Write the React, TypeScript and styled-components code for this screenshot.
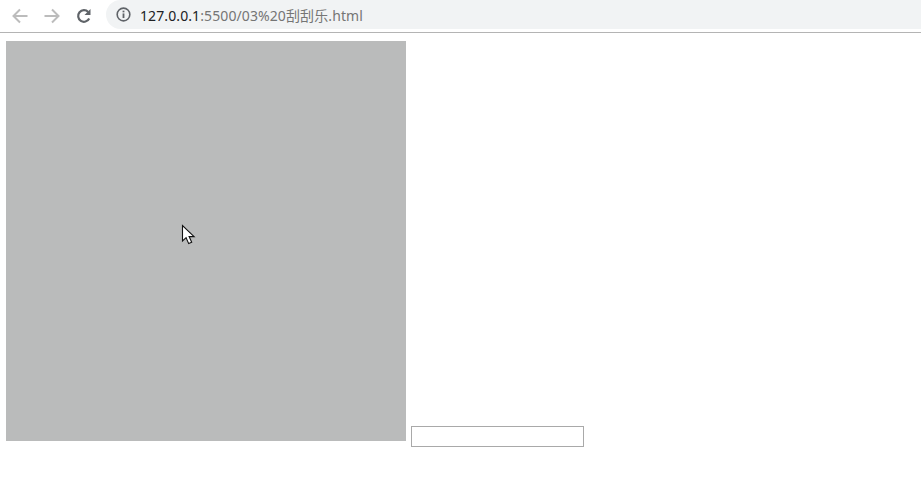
import styled, { createGlobalStyle } from "styled-components";

const GlobalStyle = createGlobalStyle`
  html, body {
    margin: 0;
    padding: 0;
    background: #fff;
  }
`;

const Page = styled.div`
  position: relative;
  width: 921px;
  height: 485px;
  overflow: hidden;
  background: #fff;
`;

const Toolbar = styled.div`
  display: flex;
  align-items: center;
  height: 32px;
  padding-left: 9px;
  border-bottom: 1px solid #b4b4b4;
  font-family: "Noto Sans", "Noto Sans CJK SC", sans-serif;
`;

const NavButton = styled.div<{ $gap?: number }>`
  display: flex;
  width: 22px;
  height: 22px;
  margin-right: ${(p) => p.$gap ?? 10}px;
  align-items: center;
  justify-content: center;
`;

const AddressBar = styled.div`
  display: flex;
  flex: 1;
  align-items: center;
  height: 29px;
  margin-top: -3px;
  margin-left: 2px;
  padding-left: 10px;
  border-radius: 15px 0 0 15px;
  background: #f1f3f4;
`;

const InfoIcon = styled.svg`
  flex: none;
  width: 15px;
  height: 15px;
  margin-right: 9px;
`;

const Url = styled.div`
  color: #757575;
  font-size: 14px;
  letter-spacing: 0.1px;
  white-space: nowrap;
`;

const Host = styled.span`
  color: #202124;
`;

const Main = styled.div`
  display: flex;
  align-items: baseline;
  gap: 5px;
  padding: 8px 6px 0;
`;

const Scratch = styled.canvas`
  display: block;
  width: 400px;
  height: 400px;
  background: #babbbb;
`;

const CodeInput = styled.input`
  box-sizing: border-box;
  width: 173px;
  height: 21px;
  padding: 1px 2px;
  border: 1px solid #a9a9a9;
  border-radius: 0;
  outline: none;
  background: #fff;
  font-size: 13px;
`;

const Cursor = styled.svg`
  position: absolute;
  left: 181px;
  top: 224px;
  width: 15px;
  height: 22px;
`;

export default function App() {
  return (
    <Page>
      <GlobalStyle />
      <Toolbar>
        <NavButton>
          <svg width="18" height="18" viewBox="0 0 18 18" fill="none" stroke="#bcbcbc" strokeWidth="2">
            <path d="M16.5 9H2.5M9 2.5 2.5 9 9 15.5" />
          </svg>
        </NavButton>
        <NavButton>
          <svg width="18" height="18" viewBox="0 0 18 18" fill="none" stroke="#bcbcbc" strokeWidth="2">
            <path d="M1.5 9h14M9 2.5 15.5 9 9 15.5" />
          </svg>
        </NavButton>
        <NavButton $gap={9}>
          <svg width="18" height="18" viewBox="0 0 18 18" fill="none">
            <path d="M14.2 11.5A5.8 5.8 0 1 1 13.2 5" stroke="#5f6368" strokeWidth="2.2" />
            <path d="M15.5 2v6h-6z" fill="#5f6368" />
          </svg>
        </NavButton>
        <AddressBar>
          <InfoIcon viewBox="0 0 14 14" fill="none">
            <circle cx="7" cy="7" r="5.9" stroke="#5f6368" strokeWidth="1.5" />
            <path d="M7 6v4.3" stroke="#5f6368" strokeWidth="1.7" />
            <path d="M7 3.4v1.6" stroke="#5f6368" strokeWidth="1.7" />
          </InfoIcon>
          <Url>
            <Host>127.0.0.1</Host>:5500/03%20刮刮乐.html
          </Url>
        </AddressBar>
      </Toolbar>
      <Main>
        <Scratch />
        <CodeInput type="text" />
      </Main>
      <Cursor viewBox="0 0 15 22">
        <path
          d="M1.5 1.5v15.5l3.6-3.3 2.6 5.9 3-1.3-2.6-5.7h5z"
          fill="#fff"
          stroke="#111"
          strokeWidth="1.1"
          strokeLinejoin="miter"
        />
      </Cursor>
    </Page>
  );
}
